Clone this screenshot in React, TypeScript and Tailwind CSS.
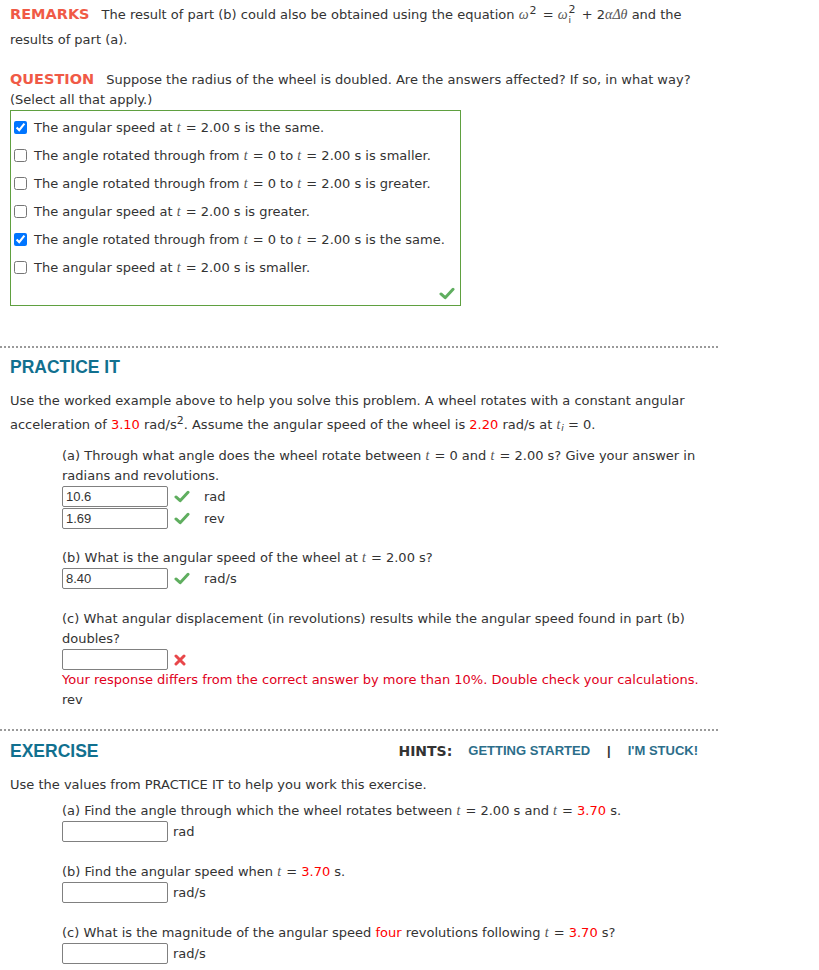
import type { ReactNode } from 'react';

const T = () => <i className="font-['Liberation_Serif'] text-[14px] text-[#555] pr-[1px]">t</i>;
const Red = ({ children }: { children: ReactNode }) => <span className="text-[#f00]">{children}</span>;

function Check() {
  return (
    <svg width="16" height="13" viewBox="0 0 17 14" className="shrink-0">
      <path d="M2 7.5 L6.5 11.5 L15 2.5" fill="none" stroke="#5fae5f" strokeWidth="3.2" strokeLinecap="round" strokeLinejoin="round" />
    </svg>
  );
}

function Cross() {
  return (
    <svg width="12" height="12" viewBox="0 0 12 12" className="shrink-0">
      <path d="M2 2 L10 10 M10 2 L2 10" stroke="#e8474a" strokeWidth="3" strokeLinecap="round" />
    </svg>
  );
}

function Field({ value, mark, unit }: { value?: string; mark?: 'ok' | 'bad'; unit?: string }) {
  return (
    <div className="flex items-center h-[21px]">
      <input
        readOnly
        value={value ?? ''}
        className="w-[106px] h-[21px] border border-[#808080] rounded-[2px] px-[3px] font-['Liberation_Sans'] text-[13px] text-[#333] outline-none bg-white"
      />
      {mark === 'ok' && <span className="ml-[6px] mr-[14px] flex"><Check /></span>}
      {mark === 'bad' && <span className="ml-[6px] flex"><Cross /></span>}
      {unit && <span className={mark ? '' : 'ml-[5px]'}>{unit}</span>}
    </div>
  );
}

const options: [ReactNode, boolean][] = [
  [<>The angular speed at <T /> = 2.00 s is the same.</>, true],
  [<>The angle rotated through from <T /> = 0 to <T /> = 2.00 s is smaller.</>, false],
  [<>The angle rotated through from <T /> = 0 to <T /> = 2.00 s is greater.</>, false],
  [<>The angular speed at <T /> = 2.00 s is greater.</>, false],
  [<>The angle rotated through from <T /> = 0 to <T /> = 2.00 s is the same.</>, true],
  [<>The angular speed at <T /> = 2.00 s is smaller.</>, false],
];

const Sym = ({ children }: { children: ReactNode }) => (
  <i className="font-['Liberation_Serif'] text-[14px] text-[#555]">{children}</i>
);

// stacked sub/superscript, e.g. ω with i below and 2 above
const SubSup = ({ sub, sup }: { sub: string; sup: string }) => (
  <span className="inline-flex flex-col align-middle leading-none ml-[1px] mr-[2px] -translate-y-[1px]">
    <span className="text-[11px]">{sup}</span>
    <span className="text-[9px] mt-[1px]">{sub}</span>
  </span>
);

export default function App() {
  return (
    <div className="w-[819px] min-h-[970px] bg-white font-['DejaVu_Sans',sans-serif] text-[13px] text-[#333]">
      <div className="w-[718px] pl-[10px] pt-[2px]">
        {/* Remarks */}
        <p className="leading-[25px]">
          <span className="font-bold text-[#f05a46] mr-[12px] text-[14.5px]">REMARKS</span>
          The result of part (b) could also be obtained using the equation <Sym>ω</Sym>
          <sup className="text-[11px] ml-[1px] mr-[2px]">2</sup> = <Sym>ω</Sym>
          <SubSup sub="i" sup="2" /> + 2<Sym>αΔθ</Sym> and the results of part (a).
        </p>

        {/* Question */}
        <p className="mt-[17px] leading-[20px]">
          <span className="font-bold text-[#f05a46] mr-[12px] text-[14.5px]">QUESTION</span>
          Suppose the radius of the wheel is doubled. Are the answers affected? If so, in what way?
          <br />
          (Select all that apply.)
        </p>

        <div className="w-[451px] border border-[#5fa040] pt-[2px]">
          {options.map(([label, checked], i) => (
            <label key={i} className="flex items-center h-[28px]">
              <input type="checkbox" defaultChecked={checked} className="m-0 ml-[3px] mr-[7px] w-[13px] h-[13px]" />
              <span>{label}</span>
            </label>
          ))}
          <div className="h-[24px] flex justify-end items-center pr-[5px]">
            <Check />
          </div>
        </div>
      </div>

      <div className="w-[718px] mt-[40px] border-t-2 border-dotted border-[#9a9a9a]" />

      <div className="w-[718px] pl-[10px]">
        <h2 className="mt-[8px] h-[22px] leading-[22px] font-['Liberation_Sans'] font-bold text-[17.5px] text-[#11708f]">PRACTICE IT</h2>
        <p className="mt-[11px] leading-[24px]">
          Use the worked example above to help you solve this problem. A wheel rotates with a constant angular acceleration of{' '}
          <Red>3.10</Red> rad/s<sup className="text-[11px]">2</sup>. Assume the angular speed of the wheel is <Red>2.20</Red> rad/s at{' '}
          <T />
          <sub className="text-[9px] italic">i</sub> = 0.
        </p>

        <div className="pl-[52px] leading-[20px]">
          <p className="mt-[9px]">
            (a) Through what angle does the wheel rotate between <T /> = 0 and <T /> = 2.00 s? Give your answer in radians and revolutions.
          </p>
          <div className="flex flex-col gap-[1px]">
            <Field value="10.6" mark="ok" unit="rad" />
            <Field value="1.69" mark="ok" unit="rev" />
          </div>

          <p className="mt-[19px]">
            (b) What is the angular speed of the wheel at <T /> = 2.00 s?
          </p>
          <Field value="8.40" mark="ok" unit="rad/s" />

          <p className="mt-[20px]">
            (c) What angular displacement (in revolutions) results while the angular speed found in part (b) doubles?
          </p>
          <Field mark="bad" />
          <p className="text-[#e0001b]">
            Your response differs from the correct answer by more than 10%. Double check your calculations.
          </p>
          <p>rev</p>
        </div>
      </div>

      <div className="w-[718px] mt-[19px] border-t-2 border-dotted border-[#9a9a9a]" />

      <div className="w-[718px] pl-[10px]">
        <div className="w-[688px] mt-[9px] h-[22px] flex items-center justify-between">
          <h2 className="font-['Liberation_Sans'] font-bold text-[17.5px] text-[#11708f]">EXERCISE</h2>
          <div className="flex items-center font-['Liberation_Sans'] font-bold text-[13px] text-[#2c6e8a]">
            <span className="font-['DejaVu_Sans'] text-[14px] text-[#333] mr-[16px]">HINTS:</span>
            <span>GETTING STARTED</span>
            <span className="mx-[17px] text-[#333]">|</span>
            <span>I&apos;M STUCK!</span>
          </div>
        </div>

        <p className="mt-[13px] leading-[20px]">Use the values from PRACTICE IT to help you work this exercise.</p>

        <div className="pl-[52px] leading-[20px]">
          <p className="mt-[6px]">
            (a) Find the angle through which the wheel rotates between <T /> = 2.00 s and <T /> = <Red>3.70</Red> s.
          </p>
          <Field unit="rad" />

          <p className="mt-[20px]">
            (b) Find the angular speed when <T /> = <Red>3.70</Red> s.
          </p>
          <Field unit="rad/s" />

          <p className="mt-[20px]">
            (c) What is the magnitude of the angular speed <Red>four</Red> revolutions following <T /> = <Red>3.70</Red> s?
          </p>
          <Field unit="rad/s" />
        </div>
      </div>
    </div>
  );
}
